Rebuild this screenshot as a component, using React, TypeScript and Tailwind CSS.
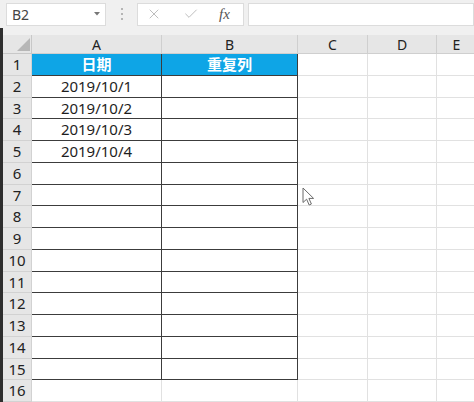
import { X, Check } from "lucide-react";

const rows = Array.from({ length: 16 }, (_, i) => i + 1);
const dates: Record<number, string> = {
  2: "2019/10/1",
  3: "2019/10/2",
  4: "2019/10/3",
  5: "2019/10/4",
};

const font = { fontFamily: '"Noto Sans", "Noto Sans CJK SC", sans-serif' };

const Cursor = () => (
  <svg
    width="14"
    height="20"
    viewBox="0 0 14 20"
    className="absolute left-[302px] top-[187px]"
  >
    <path
      d="M1 1 L1 15.5 L4.6 12.2 L7.2 18 L9.4 17 L6.9 11.4 L11.6 11.4 Z"
      fill="#fff"
      stroke="#6b6b6b"
      strokeWidth="1"
      strokeLinejoin="round"
    />
  </svg>
);

const Toolbar = () => (
  <div className="flex h-[28px] items-center">
    <div className="ml-[6px] flex h-[23px] w-[100px] items-center justify-between border border-[#dcdcdc] bg-white pl-[5px] pr-[5px]">
      <span className="text-[14px] text-[#444]">B2</span>
      <svg width="6" height="4" viewBox="0 0 6 4">
        <path d="M0 0 L6 0 L3 3.5 Z" fill="#777" />
      </svg>
    </div>
    <div className="ml-[14px] flex w-[3px] flex-col items-center gap-[3px]">
      <span className="h-[2px] w-[2px] bg-[#b5b5b5]" />
      <span className="h-[2px] w-[2px] bg-[#b5b5b5]" />
      <span className="h-[2px] w-[2px] bg-[#b5b5b5]" />
    </div>
    <div className="ml-[14px] flex h-[23px] w-[107px] items-center border border-[#dcdcdc] bg-white">
      <X size={16} strokeWidth={1.3} className="ml-[8px] text-[#b3b3b3]" />
      <Check size={16} strokeWidth={1.3} className="ml-[21px] text-[#b3b3b3]" />
      <span
        className="ml-[20px] text-[15px] italic text-[#555]"
        style={{ fontFamily: '"Liberation Serif", serif' }}
      >
        fx
      </span>
    </div>
    <div className="ml-[4px] h-[23px] flex-1 border border-[#dcdcdc] bg-white" />
  </div>
);

const colW = ["w-[130px]", "w-[136px]", "w-[70px]", "w-[69px]", "w-[40px]"];
const cols = ["A", "B", "C", "D", "E"];

const Header = () => (
  <div className="flex h-[19px]">
    <div className="relative w-[29px] shrink-0 border-b border-r border-[#c8c8c8] bg-[#e6e6e6]">
      <svg width="13" height="13" viewBox="0 0 13 13" className="absolute bottom-[2px] right-[1px]">
        <path d="M13 0 L13 13 L0 13 Z" fill="#b7b7b7" />
      </svg>
    </div>
    {cols.map((c, i) => (
      <div
        key={c}
        className={`${colW[i]} flex shrink-0 items-center justify-center border-b border-r border-[#cfcfcf] bg-[#e6e6e6] text-[14px] text-[#222]`}
      >
        {c}
      </div>
    ))}
  </div>
);

const Row = ({ n }: { n: number }) => {
  const inTable = n <= 15;
  const head = n === 1;
  const cell = (col: number) => {
    const dark = inTable && col < 2;
    return `${colW[col]} flex shrink-0 items-center justify-center border-b border-r ${
      dark ? "border-[#3c3c3c]" : "border-[#e1e1e1]"
    } ${head && col < 2 ? "bg-[#0ea5e6] font-bold text-white" : "bg-white text-[#1e1e1e]"}`;
  };
  return (
    <div className="flex h-[21.75px]">
      <div className="flex w-[29px] shrink-0 items-center justify-center border-b border-r border-[#d2d2d2] bg-[#e6e6e6] text-[15px] text-[#222]">
        {n}
      </div>
      <div className={cell(0)}>
        {head ? <span className="text-[15px]">日期</span> : <span className="text-[15px]">{dates[n] ?? ""}</span>}
      </div>
      <div className={cell(1)}>{head ? <span className="text-[15px]">重复列</span> : null}</div>
      <div className={cell(2)} />
      <div className={cell(3)} />
      <div className={cell(4)} />
    </div>
  );
};

export default function App() {
  return (
    <div className="relative h-[402px] w-[474px] overflow-hidden bg-[#f0f0f0]" style={font}>
      <Toolbar />
      <div className="flex">
        <div className="w-[3px] shrink-0 self-stretch bg-[#2e2e2e]" />
        <div className="flex flex-col pt-[7px]">
          <Header />
          {rows.map((n) => (
            <Row key={n} n={n} />
          ))}
        </div>
      </div>
      <Cursor />
    </div>
  );
}
